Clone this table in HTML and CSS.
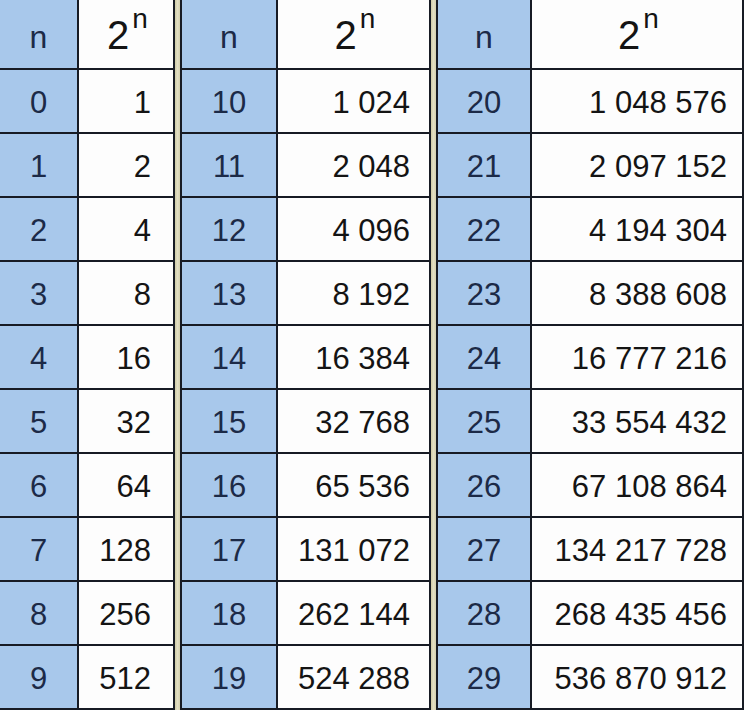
FILE: index.html
```html
<!DOCTYPE html>
<html>
<head>
<meta charset="utf-8">
<link rel="stylesheet" href="styles.css">
</head>
<body>
<div class="sheet">
  <div class="group g1">
    <div class="cell n head">n</div><div class="cell v head"><span class="base">2</span><sup>n</sup></div>
    <div class="cell n">0</div><div class="cell v">1</div>
    <div class="cell n">1</div><div class="cell v">2</div>
    <div class="cell n">2</div><div class="cell v">4</div>
    <div class="cell n">3</div><div class="cell v">8</div>
    <div class="cell n">4</div><div class="cell v">16</div>
    <div class="cell n">5</div><div class="cell v">32</div>
    <div class="cell n">6</div><div class="cell v">64</div>
    <div class="cell n">7</div><div class="cell v">128</div>
    <div class="cell n">8</div><div class="cell v">256</div>
    <div class="cell n">9</div><div class="cell v">512</div>
  </div>
  <div class="strip"></div>
  <div class="group g2">
    <div class="cell n head">n</div><div class="cell v head"><span class="base">2</span><sup>n</sup></div>
    <div class="cell n">10</div><div class="cell v">1 024</div>
    <div class="cell n">11</div><div class="cell v">2 048</div>
    <div class="cell n">12</div><div class="cell v">4 096</div>
    <div class="cell n">13</div><div class="cell v">8 192</div>
    <div class="cell n">14</div><div class="cell v">16 384</div>
    <div class="cell n">15</div><div class="cell v">32 768</div>
    <div class="cell n">16</div><div class="cell v">65 536</div>
    <div class="cell n">17</div><div class="cell v">131 072</div>
    <div class="cell n">18</div><div class="cell v">262 144</div>
    <div class="cell n">19</div><div class="cell v">524 288</div>
  </div>
  <div class="strip"></div>
  <div class="group g3">
    <div class="cell n head">n</div><div class="cell v head"><span class="base">2</span><sup>n</sup></div>
    <div class="cell n">20</div><div class="cell v">1 048 576</div>
    <div class="cell n">21</div><div class="cell v">2 097 152</div>
    <div class="cell n">22</div><div class="cell v">4 194 304</div>
    <div class="cell n">23</div><div class="cell v">8 388 608</div>
    <div class="cell n">24</div><div class="cell v">16 777 216</div>
    <div class="cell n">25</div><div class="cell v">33 554 432</div>
    <div class="cell n">26</div><div class="cell v">67 108 864</div>
    <div class="cell n">27</div><div class="cell v">134 217 728</div>
    <div class="cell n">28</div><div class="cell v">268 435 456</div>
    <div class="cell n">29</div><div class="cell v">536 870 912</div>
  </div>
</div>
</body>
</html>
```
FILE: styles.css
```css
html, body {
  margin: 0;
  padding: 0;
  background: #ffffff;
}
.sheet {
  display: flex;
  width: 744px;
  font-family: "Liberation Sans", Arial, sans-serif;
}
.group {
  display: grid;
  grid-template-rows: 68px repeat(10, 62px);
  gap: 2px;
  background: #171b24;
  border-bottom: 2px solid #171b24;
  border-right: 2px solid #171b24;
}
.g1 { grid-template-columns: 77px 94px; }
.g2 { grid-template-columns: 94px 151px; border-left: 2px solid #171b24; }
.g3 { grid-template-columns: 92px 210px; border-left: 2px solid #171b24; }
.strip {
  width: 5px;
  background: linear-gradient(90deg, #cfcba6, #e2dfc4 50%, #d3cfac);
}
.cell {
  display: flex;
  align-items: center;
  font-size: 31px;
  line-height: 1;
  padding-top: 3px;
  box-sizing: border-box;
}
.n {
  background: #a8c8eb;
  color: #1c2a47;
  justify-content: center;
}
.v {
  background: #fdfdfd;
  color: #141414;
  justify-content: flex-end;
}
.g1 .v { padding-right: 22px; }
.g2 .v { padding-right: 19px; }
.g3 .v { padding-right: 15px; }
.n.head {
  font-size: 32px;
  padding-top: 6px;
}
.v.head {
  justify-content: center;
  padding: 0 0 0 3px;
  align-items: flex-start;
}
.v.head .base {
  font-size: 40px;
  line-height: 1;
  margin-top: 15px;
}
.v.head sup {
  font-size: 28px;
  line-height: 1;
  vertical-align: baseline;
  margin-top: 5px;
  margin-left: 3px;
}
```
